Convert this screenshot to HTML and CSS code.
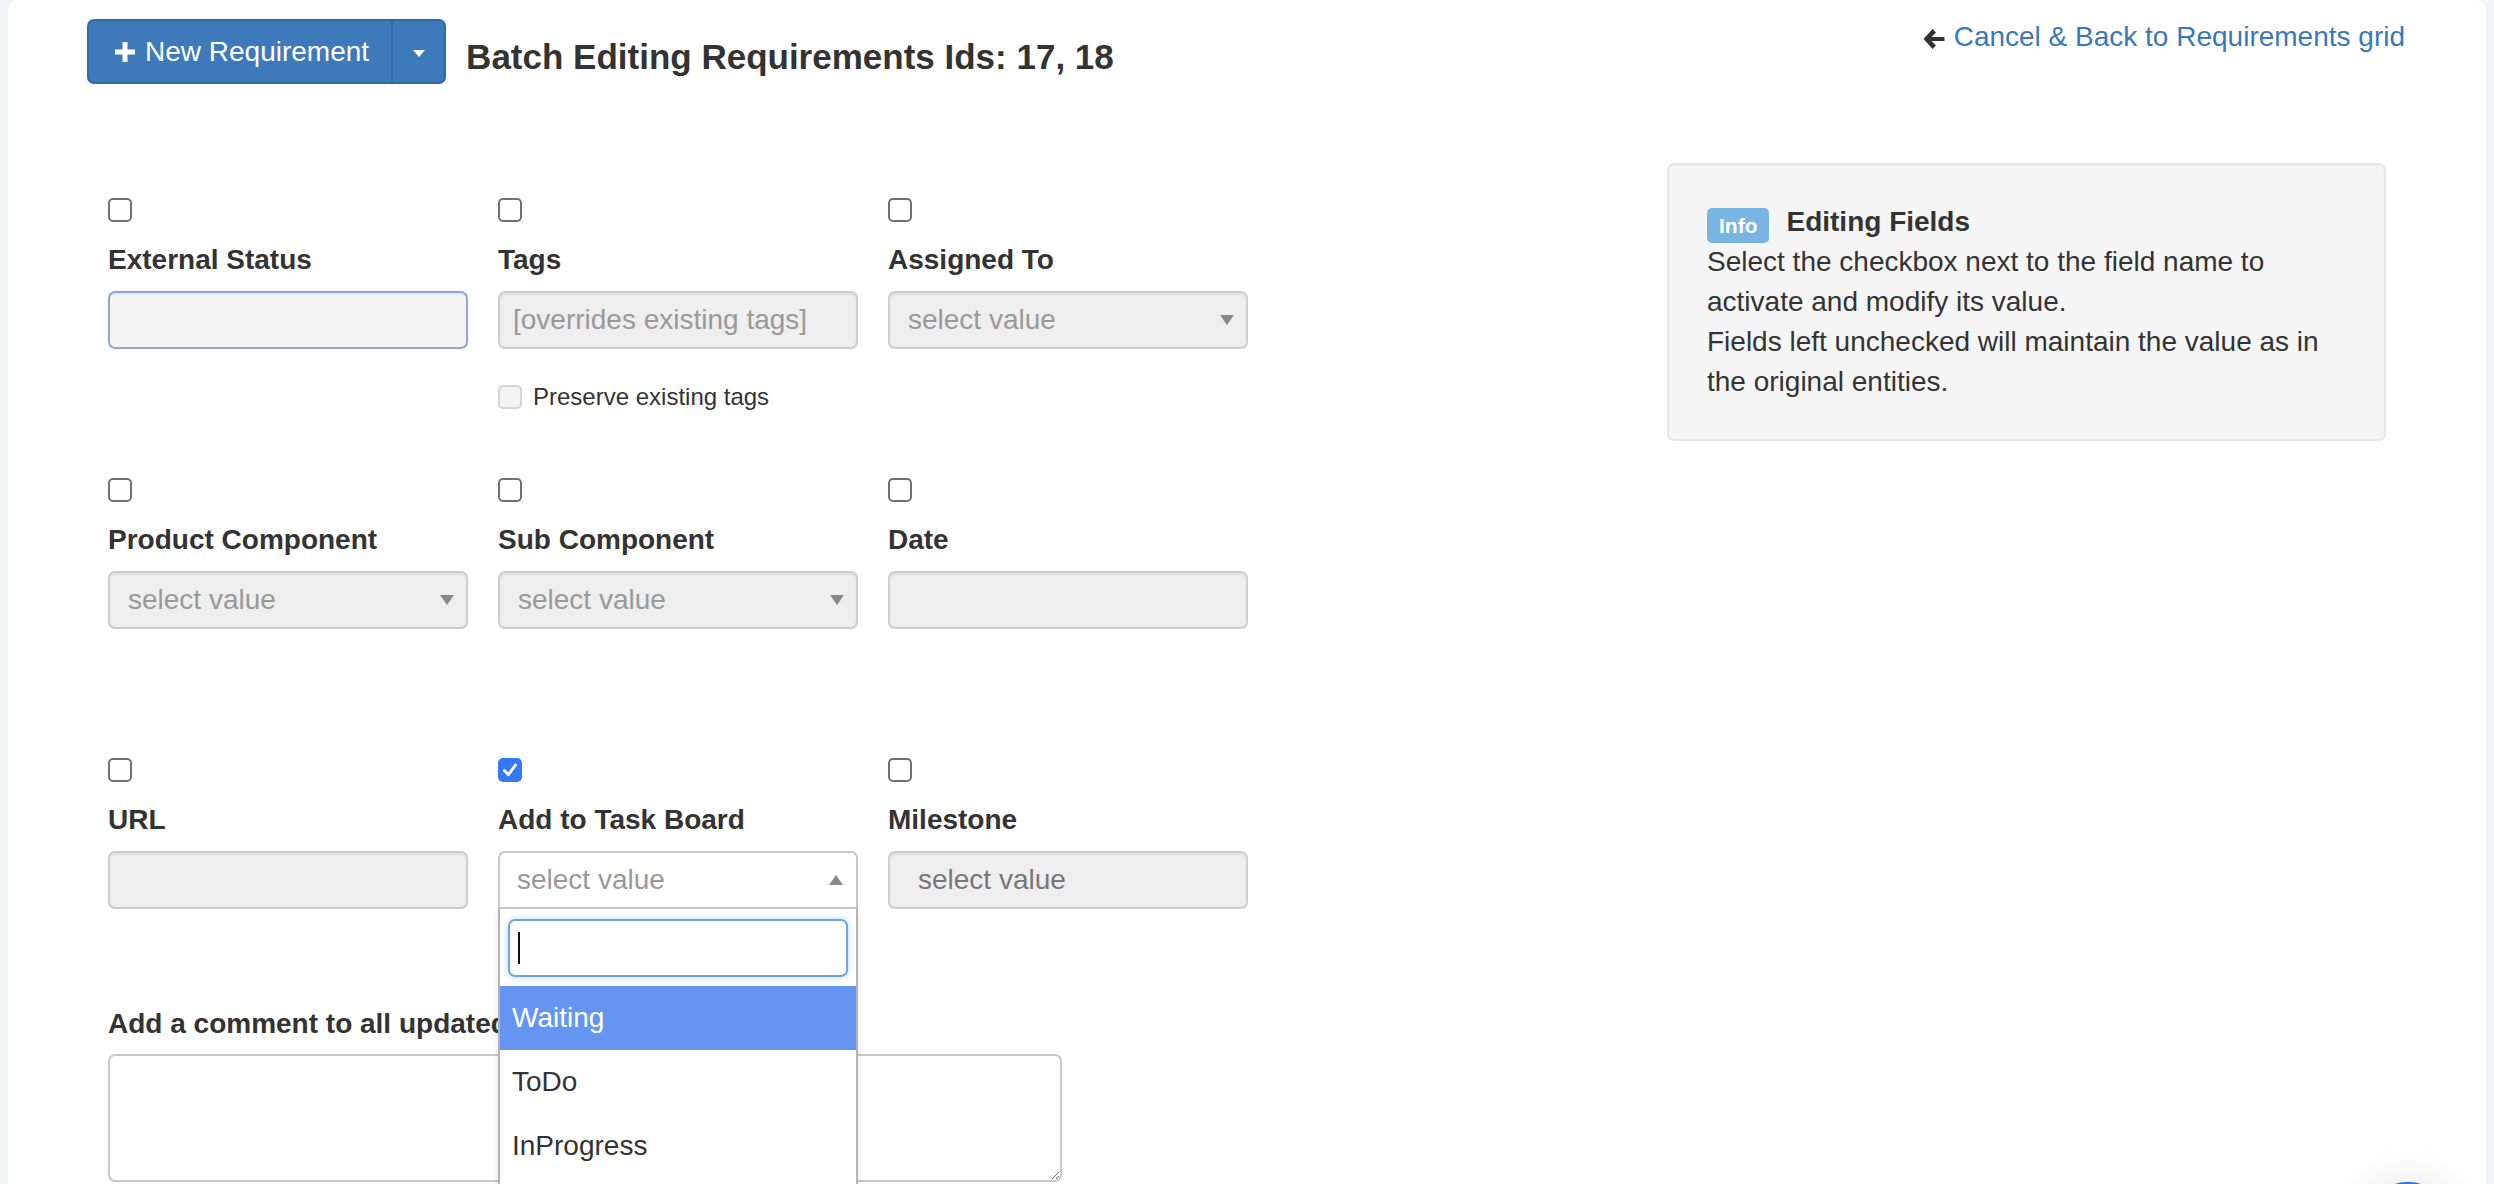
FILE: index.html
```html
<!DOCTYPE html>
<html lang="en">
<head>
<meta charset="utf-8">
<title>Batch Editing Requirements</title>
<link rel="stylesheet" href="styles.css">
</head>
<body>
<div class="page">
  <header class="topbar">
    <div class="btn-group">
      <button class="btn btn-main" type="button">
        <svg class="plus" width="20" height="20" viewBox="0 0 20 20"><path d="M7.5 0h5v7.5H20v5h-7.5V20h-5v-7.5H0v-5h7.5z" fill="#fff"/></svg>
        <span>New Requirement</span>
      </button>
      <button class="btn btn-caret" type="button"><span class="caret"></span></button>
    </div>
    <h1 class="title">Batch Editing Requirements Ids: 17, 18</h1>
    <a class="back-link" href="#">
      <svg class="back-icon" width="24" height="24" viewBox="0 0 24 24"><path d="M10.5 2 L1.5 12 L10.5 22 L14 18.5 L9.5 14 H22.5 V10 H9.5 L14 5.5 Z" fill="#333"/></svg>
      <span>Cancel &amp; Back to Requirements grid</span>
    </a>
  </header>

  <main class="content">
    <form class="form">
      <div class="field-row">
        <div class="field">
          <div class="cb-line"><span class="cb"></span></div>
          <label class="field-label">External Status</label>
          <div class="control focus"></div>
        </div>
        <div class="field">
          <div class="cb-line"><span class="cb"></span></div>
          <label class="field-label">Tags</label>
          <div class="control"><span>[overrides existing tags]</span></div>
          <div class="preserve"><span class="cb disabled"></span><span>Preserve existing tags</span></div>
        </div>
        <div class="field">
          <div class="cb-line"><span class="cb"></span></div>
          <label class="field-label">Assigned To</label>
          <div class="control select"><span>select value</span><span class="arrow-down"></span></div>
        </div>
      </div>

      <div class="field-row">
        <div class="field">
          <div class="cb-line"><span class="cb"></span></div>
          <label class="field-label">Product Component</label>
          <div class="control select"><span>select value</span><span class="arrow-down"></span></div>
        </div>
        <div class="field">
          <div class="cb-line"><span class="cb"></span></div>
          <label class="field-label">Sub Component</label>
          <div class="control select"><span>select value</span><span class="arrow-down"></span></div>
        </div>
        <div class="field">
          <div class="cb-line"><span class="cb"></span></div>
          <label class="field-label">Date</label>
          <div class="control"></div>
        </div>
      </div>

      <div class="field-row short">
        <div class="field">
          <div class="cb-line"><span class="cb"></span></div>
          <label class="field-label">URL</label>
          <div class="control"></div>
        </div>
        <div class="field">
          <div class="cb-line"><span class="cb checked"><svg width="18" height="18" viewBox="0 0 16 16"><path d="M3.2 8.6 L6.6 12.2 L12.8 3.6" stroke="#fff" stroke-width="2.6" fill="none" stroke-linecap="round" stroke-linejoin="round"/></svg></span></div>
          <label class="field-label">Add to Task Board</label>
          <div class="control open">
            <span>select value</span><span class="arrow-up"></span>
            <div class="dropdown">
              <div class="search"><span class="cursor"></span></div>
              <ul class="options">
                <li class="hl">Waiting</li>
                <li>ToDo</li>
                <li>InProgress</li>
              </ul>
            </div>
          </div>
        </div>
        <div class="field">
          <div class="cb-line"><span class="cb"></span></div>
          <label class="field-label">Milestone</label>
          <div class="control plain"><span>select value</span></div>
        </div>
      </div>

      <div class="comment">
        <label class="field-label flat">Add a comment to all updated requirements:</label>
        <textarea class="comment-box"></textarea>
      </div>
    </form>

    <aside class="info">
      <div class="info-head"><span class="badge">Info</span><span>Editing Fields</span></div>
      <p class="info-text">Select the checkbox next to the field name to activate and modify its value.<br>Fields left unchecked will maintain the value as in the original entities.</p>
    </aside>
  </main>

  <div class="chat-bubble"></div>
</div>
</body>
</html>
```

FILE: styles.css
```css
html, body {
  margin: 0;
  height: 1184px;
  overflow: hidden;
}

body {
  background: #f3f4f7;
  font-family: "Liberation Sans", Arial, sans-serif;
  color: #333;
}

.page {
  margin: 0 8px;
  height: 1184px;
  background: #fff;
  border-radius: 10px 10px 0 0;
}

/* ---------- top bar ---------- */
.topbar {
  display: flex;
  align-items: flex-start;
  height: 84px;
  box-sizing: border-box;
  padding: 19px 81px 0 79px;
}

.btn-group {
  display: flex;
  height: 65px;
}

.btn {
  display: flex;
  align-items: center;
  box-sizing: border-box;
  height: 65px;
  margin: 0;
  background: #3e7aba;
  color: #fff;
  border: 2px solid #2f6ca6;
  font-family: "Liberation Sans", Arial, sans-serif;
  font-size: 28px;
  line-height: 40px;
}

.btn-main {
  padding: 0 22px 0 26px;
  gap: 10px;
  border-radius: 7px 0 0 7px;
}

.btn-caret {
  width: 53px;
  justify-content: center;
  padding: 0;
  border-left: 0;
  border-radius: 0 7px 7px 0;
}

.caret {
  width: 0;
  height: 0;
  border-left: 6px solid transparent;
  border-right: 6px solid transparent;
  border-top: 7px solid #fff;
  margin-top: 3px;
}

.title {
  margin: 18px 0 0 20px;
  font-size: 35px;
  line-height: 40px;
  font-weight: bold;
  color: #333;
}

.back-link {
  margin: -2px 0 0 auto;
  display: flex;
  align-items: center;
  gap: 8px;
  font-size: 28px;
  line-height: 40px;
  color: #3a78b7;
  text-decoration: none;
}

.back-icon {
  margin-top: 3px;
}

/* ---------- content ---------- */
.content {
  display: flex;
  justify-content: space-between;
  align-items: flex-start;
  padding: 0 100px;
  margin-top: 79px;
}

.form {
  padding-top: 34px;
  width: 1140px;
}

.field-row {
  display: grid;
  grid-template-columns: repeat(3, 360px);
  column-gap: 30px;
  align-content: start;
  height: 280px;
}

.field-row.short {
  height: 247px;
}

.cb-line {
  height: 26px;
  display: flex;
  align-items: center;
}

.cb {
  display: block;
  width: 24px;
  height: 24px;
  box-sizing: border-box;
  border: 2px solid #717171;
  border-radius: 5px;
  background: #fff;
}

.cb.checked {
  display: flex;
  align-items: center;
  justify-content: center;
  background: #3478f6;
  border-color: #3478f6;
}

.cb.disabled {
  background: #f3f3f3;
  border-color: #d6d6d6;
}

.field-label {
  display: block;
  margin-top: 17px;
  font-size: 28px;
  line-height: 40px;
  font-weight: bold;
  color: #333;
  white-space: nowrap;
}

.field-label.flat {
  margin-top: 0;
}

.control {
  position: relative;
  display: flex;
  align-items: center;
  margin-top: 11px;
  height: 58px;
  box-sizing: border-box;
  padding: 0 13px;
  border: 2px solid #cdcdcd;
  border-radius: 7px;
  background: #eeeeee;
  box-shadow: inset 0 2px 2px rgba(0, 0, 0, 0.06);
  font-size: 28px;
  color: #999;
  white-space: nowrap;
}

.control.focus {
  background: #f5f5f5;
  border-color: #8aa8cf;
}

.control.select {
  padding: 0 12px 0 18px;
}

.control.plain {
  padding-left: 28px;
  color: #777;
}

.arrow-down {
  margin-left: auto;
  width: 0;
  height: 0;
  border-left: 7.5px solid transparent;
  border-right: 7.5px solid transparent;
  border-top: 10px solid #888;
}

.arrow-up {
  margin-left: auto;
  width: 0;
  height: 0;
  border-left: 7px solid transparent;
  border-right: 7px solid transparent;
  border-bottom: 10px solid #888;
  margin-right: 1px;
}

.control.open {
  background: #fff;
  border-color: #c8c8c8;
  border-radius: 7px 7px 0 0;
  box-shadow: none;
  padding: 0 12px 0 17px;
}

.dropdown {
  position: absolute;
  left: -2px;
  right: -2px;
  top: 54px;
  z-index: 10;
  height: 280px;
  background: #fff;
  border: 2px solid #b4b4b4;
  border-top-color: #c6c6c6;
  padding-top: 10px;
  box-shadow: 0 4px 6px rgba(0, 0, 0, 0.12);
}

.search {
  display: flex;
  align-items: center;
  margin: 0 8px;
  height: 58px;
  box-sizing: border-box;
  padding-left: 8px;
  border: 2px solid #70a5e5;
  border-radius: 7px;
  box-shadow: 0 0 7px rgba(102, 160, 230, 0.45);
  background: #fff;
}

.cursor {
  width: 2px;
  height: 32px;
  background: #111;
}

.options {
  list-style: none;
  margin: 9px 0 0;
  padding: 0;
}

.options li {
  height: 64px;
  line-height: 64px;
  padding-left: 12px;
  font-size: 28px;
  color: #333;
}

.options li.hl {
  background: #6694f1;
  color: #fff;
}

.preserve {
  display: flex;
  align-items: center;
  gap: 11px;
  margin-top: 36px;
  font-size: 24px;
  line-height: 24px;
  color: #333;
}

.comment-box {
  display: block;
  margin-top: 10px;
  width: 954px;
  height: 128px;
  box-sizing: border-box;
  border: 2px solid #c8c8c8;
  border-radius: 7px;
  background: #fff;
  font-family: "Liberation Sans", Arial, sans-serif;
  font-size: 28px;
}

/* ---------- info well ---------- */
.info {
  width: 719px;
  box-sizing: border-box;
  padding: 37px 40px 37px 38px;
  background: #f5f5f5;
  border: 2px solid #e6e6e6;
  border-radius: 7px;
  box-shadow: inset 0 1px 1px rgba(0, 0, 0, 0.04);
  font-size: 28px;
  line-height: 40px;
  color: #333;
}

.info-head {
  display: flex;
  align-items: center;
  height: 40px;
  font-weight: bold;
}

.badge {
  height: 35px;
  line-height: 35px;
  padding: 0 12px;
  margin: 7px 17px 0 0;
  border-radius: 5px;
  background: #78b5e2;
  color: #fff;
  font-size: 21px;
  font-weight: bold;
}

.info-text {
  margin: 0;
}

/* ---------- floating widget ---------- */
.chat-bubble {
  position: fixed;
  right: 41px;
  top: 1182px;
  width: 90px;
  height: 90px;
  border-radius: 50%;
  background: #2f6df0;
  box-shadow: 0 0 40px 8px rgba(0, 0, 0, 0.08);
}
```
